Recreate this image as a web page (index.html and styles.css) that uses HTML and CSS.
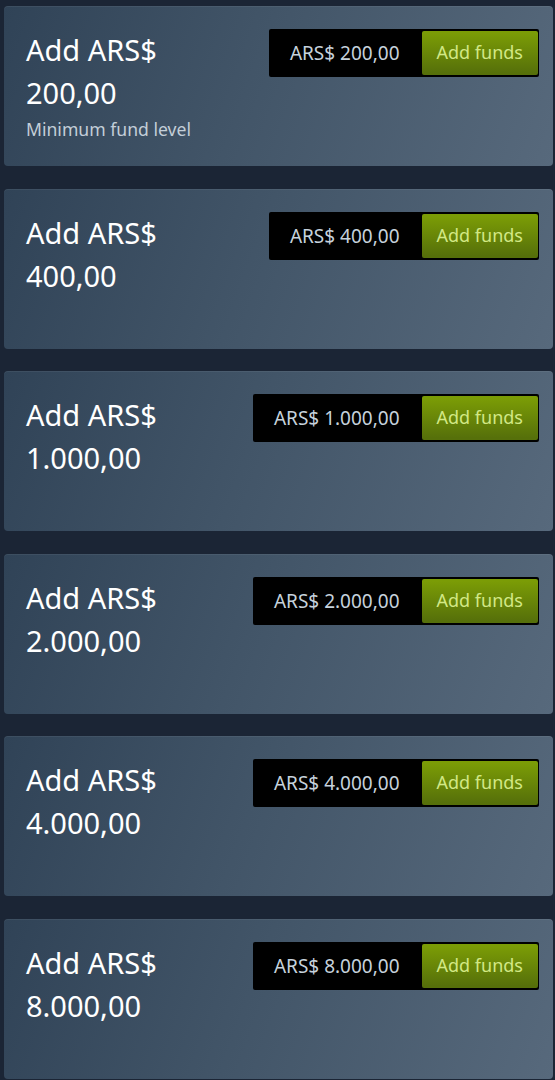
FILE: index.html
```html
<!DOCTYPE html>
<html lang="en">
	<head>
		<meta charset="UTF-8" />
		<meta name="viewport" content="width=device-width, initial-scale=1.0" />
		<title>Add funds to your Steam Wallet</title>
		<link rel="stylesheet" href="styles.css">
	</head>

	<body>
		<div class="fund-list">
			<div class="fund-card">
				<div class="fund-info">
					<h2 class="fund-title">Add ARS$<br>200,00</h2>
					<p class="fund-note">Minimum fund level</p>
				</div>
				<div class="fund-action">
					<span class="fund-price">ARS$ 200,00</span>
					<a class="btn-green" href="#">Add funds</a>
				</div>
			</div>
			<div class="fund-card">
				<div class="fund-info">
					<h2 class="fund-title">Add ARS$<br>400,00</h2>
				</div>
				<div class="fund-action">
					<span class="fund-price">ARS$ 400,00</span>
					<a class="btn-green" href="#">Add funds</a>
				</div>
			</div>
			<div class="fund-card">
				<div class="fund-info">
					<h2 class="fund-title">Add ARS$<br>1.000,00</h2>
				</div>
				<div class="fund-action">
					<span class="fund-price">ARS$ 1.000,00</span>
					<a class="btn-green" href="#">Add funds</a>
				</div>
			</div>
			<div class="fund-card">
				<div class="fund-info">
					<h2 class="fund-title">Add ARS$<br>2.000,00</h2>
				</div>
				<div class="fund-action">
					<span class="fund-price">ARS$ 2.000,00</span>
					<a class="btn-green" href="#">Add funds</a>
				</div>
			</div>
			<div class="fund-card">
				<div class="fund-info">
					<h2 class="fund-title">Add ARS$<br>4.000,00</h2>
				</div>
				<div class="fund-action">
					<span class="fund-price">ARS$ 4.000,00</span>
					<a class="btn-green" href="#">Add funds</a>
				</div>
			</div>
			<div class="fund-card">
				<div class="fund-info">
					<h2 class="fund-title">Add ARS$<br>8.000,00</h2>
				</div>
				<div class="fund-action">
					<span class="fund-price">ARS$ 8.000,00</span>
					<a class="btn-green" href="#">Add funds</a>
				</div>
			</div>
		</div>
	</body>
</html>
```

FILE: styles.css
```css
* {
	padding: 0;
	margin: 0;
	box-sizing: border-box;
}
body {
	background-color: #1b2535;
	font-family: "Noto Sans", "Open Sans", sans-serif;
	padding: 6px 2px 0 4px;
}
.fund-list {
	display: flex;
	flex-direction: column;
	gap: 22.6px;
}
.fund-card {
	height: 160px;
	display: flex;
	justify-content: space-between;
	align-items: flex-start;
	padding: 22px 14px 0 22px;
	border-radius: 4px;
	background: linear-gradient(110deg, #304357 0%, #425568 45%, #57697c 100%);
	box-shadow: inset 0 1px 0 rgba(255, 255, 255, 0.06);
}
.fund-title {
	font-weight: normal;
	font-size: 29px;
	line-height: 43px;
	color: #ffffff;
}
.fund-note {
	margin-top: 3px;
	font-size: 17.6px;
	line-height: 24px;
	color: #c3ced8;
}
.fund-action {
	display: flex;
	align-items: center;
	margin-top: 1px;
	padding: 2px 1px 2px 2px;
	border-radius: 2px;
	background-color: #000000;
}
.fund-price {
	padding: 0 22px 0 19px;
	font-size: 19px;
	color: #c6d2dc;
}
.btn-green {
	display: block;
	height: 44px;
	line-height: 42px;
	padding: 0 15px;
	border-radius: 2px;
	font-size: 18px;
	color: #d2e885;
	text-decoration: none;
	background: linear-gradient(to bottom, #7b9c06 5%, #56700a 95%);
}
```
